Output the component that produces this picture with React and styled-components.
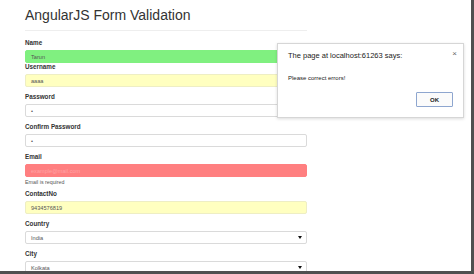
import React from 'react';
import styled, { createGlobalStyle } from 'styled-components';

const colors = {
  text: '#333',
  border: '#dadada',
  success: '#80f080',
  warning: '#ffffc0',
  danger: '#ff7f80',
  frame: '#505050',
};

const GlobalStyle = createGlobalStyle`
  html, body {
    margin: 0;
    padding: 0;
    background: #fff;
  }
  body {
    font-family: "Liberation Sans", Arial, sans-serif;
    color: ${colors.text};
  }
`;

const fields = [
  { label: 'Name', value: 'Tarun', tone: 'success', gap: 0 },
  { label: 'Username', value: 'aaaa', tone: 'warning', gap: 6 },
  { label: 'Password', value: '•', gap: 6 },
  { label: 'Confirm Password', value: '•', gap: 6 },
  { label: 'Email', placeholder: 'example@mail.com', tone: 'danger', error: 'Email is required', gap: 4 },
  { label: 'ContactNo', value: '9434576819', tone: 'warning', gap: 6 },
  { label: 'Country', value: 'India', select: true, gap: 6 },
  { label: 'City', value: 'Kolkata', select: true, gap: 0 },
];

const App = () => (
  <>
    <GlobalStyle />
    <Window>
      <Page>
        <Title>AngularJS Form Validation</Title>
        <Rule />
        <Form>
          {fields.map((f) => (
            <Group key={f.label} gap={f.gap}>
              <Label>{f.label}</Label>
              {f.select ? (
                <SelectBox>
                  <span>{f.value}</span>
                  <svg width="4" height="3" viewBox="0 0 4 3">
                    <path d="M0 0h4L2 3z" fill="#111" />
                  </svg>
                </SelectBox>
              ) : (
                <Input tone={f.tone}>
                  {f.value ? f.value : <Placeholder>{f.placeholder}</Placeholder>}
                </Input>
              )}
              {f.error && <Help>{f.error}</Help>}
            </Group>
          ))}
        </Form>
      </Page>

      <Dialog>
        <DialogHead>
          <DialogTitle>The page at localhost:61263 says:</DialogTitle>
          <Close>×</Close>
        </DialogHead>
        <Message>Please correct errors!</Message>
        <Actions>
          <OkButton>OK</OkButton>
        </Actions>
      </Dialog>
    </Window>
  </>
);

export default App;

const Window = styled.div`
  position: relative;
  width: 474px;
  height: 274px;
  box-sizing: border-box;
  border-right: 3px solid ${colors.frame};
  border-bottom: 3px solid ${colors.frame};
  overflow: hidden;
  background: #fff;
`;

const Page = styled.div`
  width: 282px;
  padding: 7px 0 0 25px;
`;

const Title = styled.h1`
  margin: 0;
  font-size: 14px;
  line-height: 16px;
  font-weight: normal;
  color: #333;
`;

const Rule = styled.div`
  height: 1px;
  background: #eee;
  margin: 7px 0 8px;
`;

const Form = styled.div`
  display: flex;
  flex-direction: column;
`;

const Group = styled.div`
  display: flex;
  flex-direction: column;
  margin-bottom: ${(p) => p.gap}px;
`;

const Label = styled.label`
  display: block;
  font-size: 6.3px;
  line-height: 8px;
  font-weight: bold;
  color: #333;
  margin-bottom: 3px;
`;

const toneBg = {
  success: colors.success,
  warning: colors.warning,
  danger: colors.danger,
};

const toneBorder = {
  success: colors.success,
  warning: '#eeeec4',
  danger: colors.danger,
};

const Input = styled.div`
  height: 13px;
  box-sizing: border-box;
  padding: 0 5px;
  display: flex;
  align-items: center;
  font-size: 5.6px;
  color: #555;
  background: ${(p) => toneBg[p.tone] || '#fff'};
  border: 1px solid ${(p) => toneBorder[p.tone] || colors.border};
  border-radius: 2px;
`;

const Placeholder = styled.span`
  color: #ffa3a5;
`;

const SelectBox = styled.div`
  height: 13px;
  box-sizing: border-box;
  padding: 0 4px 0 5px;
  display: flex;
  align-items: center;
  justify-content: space-between;
  font-size: 5.6px;
  color: #555;
  background: #fff;
  border: 1px solid ${colors.border};
  border-radius: 2px;
`;

const Help = styled.div`
  font-size: 5.3px;
  line-height: 8px;
  margin-top: 1px;
  color: #555;
`;

const Dialog = styled.div`
  position: absolute;
  left: 277px;
  top: 43px;
  width: 187px;
  height: 75px;
  box-sizing: border-box;
  background: #fff;
  border: 1px solid #d6d6d6;
  box-shadow: 0 1px 3px rgba(0, 0, 0, 0.14);
  padding: 6px 10px 10px 10px;
  display: flex;
  flex-direction: column;
`;

const DialogHead = styled.div`
  display: flex;
  justify-content: space-between;
  align-items: flex-start;
`;

const DialogTitle = styled.div`
  font-size: 7.5px;
  line-height: 10px;
  margin-top: 1px;
  color: #222;
`;

const Close = styled.div`
  font-size: 8px;
  line-height: 8px;
  color: #666;
  margin-right: -4px;
`;

const Message = styled.div`
  font-size: 6px;
  line-height: 8px;
  margin-top: 13px;
  color: #222;
`;

const Actions = styled.div`
  margin-top: auto;
  display: flex;
  justify-content: flex-end;
`;

const OkButton = styled.button`
  width: 37px;
  height: 15px;
  padding: 0;
  font-family: "Liberation Sans", Arial, sans-serif;
  font-size: 6px;
  font-weight: bold;
  color: #222;
  background: #fbfbfb;
  border: 1px solid #8ea6cf;
  border-radius: 1px;
`;
